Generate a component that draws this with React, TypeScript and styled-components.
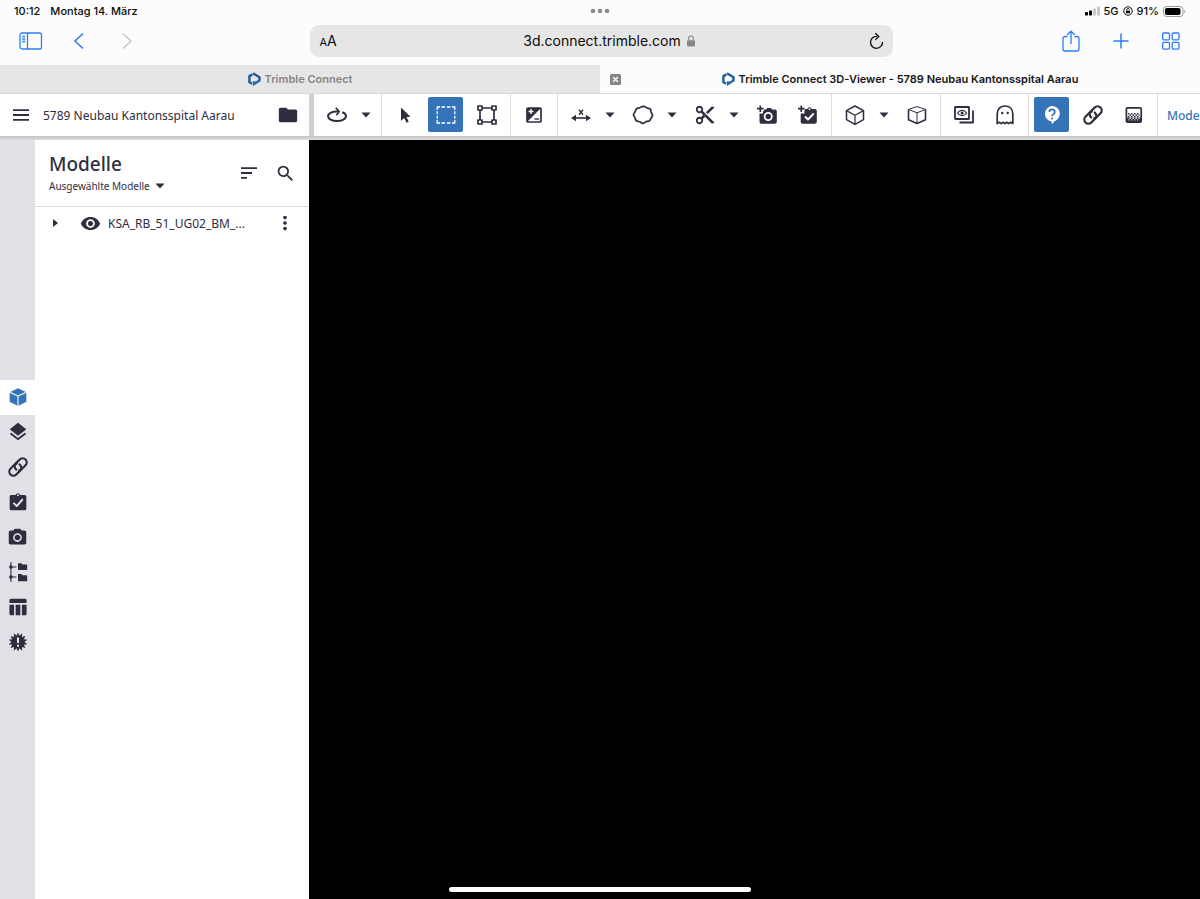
import React from "react";
import styled, { createGlobalStyle, css } from "styled-components";
import {
  MdContentCut,
  MdFolder,
  MdLayers,
  MdMoreVert,
  MdPhotoCamera,
  MdSearch,
  MdVisibility,
} from "react-icons/md";

const ink = "#2e2e3e";
const accent = "#3573b9";
const safariBlue = "#2f7cf6";

const GlobalStyle = createGlobalStyle`
  *, *::before, *::after { box-sizing: border-box; }
  body { margin: 0; background: #fcfcfc; }
  button, input, select { font: inherit; color: inherit; }
`;

const Page = styled.div`
  display: flex;
  flex-direction: column;
  min-height: 100vh;
  position: relative;
  font-family: "Noto Sans", "Open Sans", sans-serif;
  color: ${ink};
  overflow: hidden;
`;

/* ---------- Browser chrome ---------- */

const Chrome = styled.header`
  font-family: Inter, "Liberation Sans", sans-serif;
  color: #0b0b0b;
  background: #fcfcfc;
`;

const StatusBar = styled.div`
  display: grid;
  grid-template-columns: 1fr auto 1fr;
  align-items: center;
  height: 22px;
  padding: 0 14px;
  font-size: 11px;
  font-weight: 500;
`;

const StatusSide = styled.div<{ $end?: boolean; $gap: number }>`
  display: flex;
  align-items: center;
  justify-content: ${(p) => (p.$end ? "flex-end" : "flex-start")};
  gap: ${(p) => p.$gap}px;
`;

const NavRow = styled.div`
  display: grid;
  grid-template-columns: 1fr 583px 1fr;
  align-items: center;
  height: 43px;
  padding: 0 13px 6px 15px;
`;

const NavSide = styled.div<{ $end?: boolean }>`
  display: flex;
  align-items: center;
  justify-content: ${(p) => (p.$end ? "flex-end" : "flex-start")};
  gap: ${(p) => (p.$end ? 18 : 16)}px;
`;

const ChromeButton = styled.button<{ $muted?: boolean }>`
  display: grid;
  place-items: center;
  width: 32px;
  height: 32px;
  padding: 0;
  border: 0;
  background: none;
  color: ${(p) => (p.$muted ? "#c4c4c6" : safariBlue)};
`;

const AddressBar = styled.div`
  display: grid;
  grid-template-columns: 1fr auto 1fr;
  align-items: center;
  height: 32px;
  padding: 0 8px 0 10px;
  border-radius: 9px;
  background: #e6e6e6;
`;

const TextSizeButton = styled.button`
  justify-self: start;
  display: flex;
  align-items: baseline;
  padding: 0;
  border: 0;
  background: none;
  font-size: 14px;
`;

const SmallA = styled.span`
  font-size: 11px;
`;

const AddressField = styled.div`
  display: flex;
  align-items: center;
  gap: 5px;
  padding-left: 15px;
  color: #87878a;
`;

const AddressInput = styled.input`
  field-sizing: content;
  padding: 0;
  border: 0;
  background: none;
  color: #0b0b0b;
  font-size: 14px;
  outline: none;
`;

const ReloadButton = styled.button`
  justify-self: end;
  display: grid;
  place-items: center;
  padding: 0;
  border: 0;
  background: none;
`;

const TabStrip = styled.div`
  display: grid;
  grid-template-columns: 1fr 1fr;
  height: 29px;
  border-bottom: 1px solid #dadadb;
`;

const TabSlot = styled.div<{ $active?: boolean }>`
  display: grid;
  grid-template-columns: 20px 1fr 20px;
  align-items: center;
  padding: 0 5px;
  background: ${(p) => (p.$active ? "#fcfcfc" : "#e6e6e6")};
  color: ${(p) => (p.$active ? "#161616" : "#858587")};
`;

const TabButton = styled.button`
  grid-column: 2;
  display: flex;
  align-items: center;
  justify-content: center;
  gap: 4px;
  padding: 0;
  border: 0;
  background: none;
  font-size: 11px;
  font-weight: 600;
`;

const CloseTab = styled.button`
  display: grid;
  place-items: center;
  width: 20px;
  height: 20px;
  padding: 0;
  border: 0;
  background: none;
`;

/* ---------- Viewer toolbar ---------- */

const TopBar = styled.div`
  display: flex;
  gap: 5px;
  height: 46px;
  padding-bottom: 4px;
  background: linear-gradient(#cfcfd2 0 42px, #c3c3c5 42px, #dcdcde 46px);
`;

const ProjectBar = styled.div`
  flex: none;
  display: flex;
  align-items: center;
  width: 309px;
  padding: 0 9px 0 9px;
  background: #fff;
`;

const ProjectName = styled.span`
  flex: 1;
  padding-left: 10px;
  font-size: 12px;
  white-space: nowrap;
`;

const PlainButton = styled.button`
  display: grid;
  place-items: center;
  width: 24px;
  height: 24px;
  padding: 0;
  border: 0;
  background: none;
  color: ${ink};
`;

const Toolbar = styled.div`
  flex: 1;
  min-width: 0;
  display: flex;
  overflow: hidden;
  background: #fff;
`;

const ToolGroup = styled.div`
  flex: none;
  display: flex;
  align-items: center;
  padding: 0 3px 1px 2px;
  border-right: 1px solid #dbdbe0;
`;

const ToolButton = styled.button<{ $active?: boolean }>`
  display: grid;
  place-items: center;
  width: 35px;
  height: 35px;
  margin: 0 3px;
  padding: 0;
  border: 0;
  border-radius: 2px;
  background: none;
  color: ${ink};
  ${(p) =>
    p.$active &&
    css`
      background: ${accent};
      color: #fff;
    `}
`;

const CaretButton = styled.button`
  display: flex;
  align-items: center;
  width: 21px;
  height: 35px;
  padding: 0 0 0 4px;
  border: 0;
  background: none;
  color: ${ink};
`;

const TextButton = styled.button`
  flex: none;
  padding: 0 0 0 9px;
  border: 0;
  background: none;
  color: ${accent};
  font-size: 12px;
  font-weight: 500;
`;

/* ---------- Body ---------- */

const Body = styled.div`
  flex: 1;
  display: flex;
`;

const Rail = styled.nav`
  display: flex;
  flex-direction: column;
  justify-content: center;
  width: 35px;
  background: #e0e0e6;
`;

const RailButton = styled.button<{ $active?: boolean }>`
  display: grid;
  place-items: center;
  height: 35px;
  padding: 0;
  border: 0;
  background: ${(p) => (p.$active ? "#fff" : "none")};
  color: ${(p) => (p.$active ? accent : ink)};
`;

const Panel = styled.aside`
  width: 274px;
  background: #fff;
`;

const PanelHeader = styled.div`
  display: flex;
  align-items: center;
  gap: 12px;
  height: 67px;
  padding: 0 12px 0 14px;
  border-bottom: 1px solid #d9d9df;
`;

const PanelHeading = styled.div`
  flex: 1;
`;

const PanelTitle = styled.h1`
  margin: 0;
  font-size: 19px;
  line-height: 26px;
  font-weight: 500;
`;

const FilterSelect = styled.label`
  position: relative;
  display: flex;
  align-items: center;
  width: max-content;
  height: 18px;

  svg {
    position: absolute;
    right: 0;
    pointer-events: none;
  }
`;

const Select = styled.select`
  appearance: none;
  padding: 0 15px 0 0;
  border: 0;
  background: none;
  font-size: 10px;
  line-height: 18px;
`;

const ModelList = styled.ul`
  margin: 0;
  padding: 0;
  list-style: none;
`;

const ModelRow = styled.li`
  display: flex;
  align-items: center;
  height: 32px;
  padding: 0 12px 0 8px;
`;

const ModelName = styled.span`
  flex: 1;
  padding-left: 6px;
  font-size: 12px;
  white-space: nowrap;
`;

const EyeButton = styled(PlainButton)`
  margin-left: 11px;
`;

const Viewport = styled.main`
  flex: 1;
  background: #000;
`;

const HomeIndicator = styled.div`
  position: absolute;
  left: 50%;
  bottom: 7px;
  width: 302px;
  height: 5px;
  border-radius: 3px;
  background: #fff;
  transform: translateX(-50%);
`;

/* ---------- Icons ---------- */

type IconProps = { size?: number; weight?: number; children: React.ReactNode };

const Icon = ({ size = 24, weight = 2, children }: IconProps) => (
  <svg
    width={size}
    height={size}
    viewBox="0 0 24 24"
    fill="none"
    stroke="currentColor"
    strokeWidth={weight}
    strokeLinejoin="round"
    aria-hidden="true"
  >
    {children}
  </svg>
);

const Caret = () => (
  <svg width="10" height="6" viewBox="0 0 10 6" aria-hidden="true">
    <path d="M0.5 0.5h9L5 5.5z" fill={ink} />
  </svg>
);

const TrimbleLogo = () => (
  <svg width="13" height="14" viewBox="0 0 13 14" fill="none" stroke="#1d5a9a" strokeWidth="2.400" aria-hidden="true">
    <path d="M4.400 2.400L1.400 4.200v6l2.600 1.600" />
    <path d="M5 1.300l6.500 4v3" />
    <path d="M12.300 8L6 12V9.300" stroke="#2a6cab" />
  </svg>
);

const Rotate = () => (
  <Icon>
    <path d="M13.500 8.600C7.500 8 3 10.300 3 13.200 3 15.900 7 18 12 18s9-2.100 9-4.800c0-1.700-1.400-3.100-3.800-3.900" />
    <path d="M10.800 4.800l3.400 3.800-2.800 3.600" strokeWidth="1.700" />
  </Icon>
);

const Cursor = () => (
  <Icon>
    <path d="M8 4.500v13.200l3.200-2.700 2.300 4.700 2.200-1-2.200-4.700 4-.3z" fill="currentColor" stroke="none" />
  </Icon>
);

const Marquee = () => (
  <Icon weight={1.3}>
    <path d="M6 4H3.200V7M18 4h2.800V7M6 20H3.200V17M18 20h2.800V17M7.500 4h3.600M12.900 4h3.600M7.500 20h3.600M12.900 20h3.600M3.200 8.200v3M3.200 12.800v3M20.800 8.200v3M20.800 12.800v3" />
  </Icon>
);

const Transform = () => (
  <Icon weight={1.7}>
    <path d="M7 5h10M7 19h10M5 7v10M19 7v10" />
    <path d="M3 3h4v4H3zM17 3h4v4h-4zM3 17h4v4H3zM17 17h4v4h-4z" />
  </Icon>
);

const Exposure = () => (
  <Icon weight={1.7}>
    <rect x="5" y="5" width="14" height="14" rx="1" />
    <path d="M5 19V5h14z" fill="currentColor" stroke="none" />
    <path d="M9 6v5M6.500 8.500h5" stroke="#fff" strokeWidth="1.400" />
    <path d="M12.500 16h4.500" strokeWidth="1.400" />
  </Icon>
);

const Measure = () => (
  <Icon weight={1.6}>
    <path d="M6 15h12" />
    <path d="M2 15l5-3.200v6.400zM22 15l-5-3.200v6.400z" fill="currentColor" stroke="none" />
    <path d="M10 6.800l4 5M14 6.800l-4 5" strokeWidth="1.400" />
  </Icon>
);

const Cloud = () => (
  <Icon weight={1.7}>
    <path d="M7.500 5.200C9 5.400 10 3.300 12.300 3.300S15.300 5 16.800 5.100c2.200.1 3.300 1.600 3.100 3.400-.1 1.500 1.600 2 1.600 3.900s-1.700 2.300-2 3.700c-.4 1.700-1.700 2.500-3.500 2.300-1.500-.1-1.900 1.900-4 1.900s-2.700-1.700-4.200-1.800c-2.400-.1-3.500-1.200-3.600-3-.1-1.500-1.700-2-1.700-3.800s1.900-2.400 2-3.800c.1-1.700 1.300-2.900 3-2.700z" />
  </Icon>
);

const SnapCamera = () => (
  <Icon>
    <path
      d="M9 8V6.500h2L12.300 5h3.400L17.200 6.500H20a1.800 1.800 0 0 1 1.800 1.800V19a1.800 1.800 0 0 1-1.800 1.800H6.300A1.800 1.800 0 0 1 4.500 19V10.500H8V8z"
      fill="currentColor"
      stroke="none"
    />
    <circle cx="13.200" cy="13.500" r="3.600" stroke="#fff" strokeWidth="1.800" />
    <path d="M5.300 2.500v6.500M2 5.700h6.600" strokeWidth="1.700" />
  </Icon>
);

const AddTask = () => (
  <Icon>
    <path
      d="M9.500 6h1.800a2.300 2.300 0 0 1 4.400 0H19a1.800 1.800 0 0 1 1.800 1.800V19a1.800 1.800 0 0 1-1.800 1.800H6.500A1.800 1.800 0 0 1 4.700 19V10.500H8.500V7z"
      fill="currentColor"
      stroke="none"
    />
    <circle cx="13.500" cy="6.200" r="0.900" fill="#fff" stroke="none" />
    <path d="M9 13.500l3 3 5.700-6" stroke="#fff" />
    <path d="M5.300 2.500v6.500M2 5.700h6.600" strokeWidth="1.700" />
  </Icon>
);

const Cube = () => (
  <Icon weight={1.5}>
    <path d="M12 3l8.500 4.600v9L12 21.300l-8.500-4.700v-9z" />
    <path d="M3.500 7.600L12 12.200l8.500-4.600M12 12.200v9" strokeWidth="1.200" />
  </Icon>
);

const ClipBox = () => (
  <Icon weight={1.6}>
    <path d="M3.500 6.400v10.300l8.500 3.800 8.500-3.800V6.400" />
    <path d="M3.500 6.400L12 3.600l8.500 2.800L12 9.800zM12 9.800v10.700" strokeWidth="1" />
  </Icon>
);

const Views = () => (
  <Icon weight={1.8}>
    <rect x="3" y="4" width="14" height="12" rx="0.500" />
    <path d="M21 7.500v12H7.500" />
    <path d="M5.600 10c2.200-3.600 6.800-3.600 9 0-2.200 3.600-6.800 3.600-9 0z" strokeWidth="1.200" />
    <circle cx="10.100" cy="10" r="1.500" fill="currentColor" stroke="none" />
  </Icon>
);

const Ghost = () => (
  <Icon weight={1.7}>
    <path d="M4.200 20.500V11C4.200 6 7.500 3 12 3s7.800 3 7.800 8v9.500l-2.200-1.200-1.900 1.300-1.900-1.300-1.800 1.300-1.800-1.300-1.900 1.300-1.900-1.300z" />
    <circle cx="9.300" cy="10" r="1.200" fill="currentColor" stroke="none" />
    <circle cx="14.700" cy="10" r="1.200" fill="currentColor" stroke="none" />
  </Icon>
);

const Help = () => (
  <Icon>
    <path d="M12 3a7.800 7.800 0 0 1 2.500 15.200L11.800 21.500V18.500A7.800 7.800 0 0 1 12 3z" fill="currentColor" stroke="none" />
    <path d="M9.300 8.900c.2-3.300 5.500-3.300 5.500.1 0 2-2.700 2.200-2.700 4.300" stroke={accent} strokeWidth="1.800" />
    <circle cx="12.100" cy="15.500" r="1.100" fill={accent} stroke="none" />
  </Icon>
);

const Chain = () => (
  <Icon weight={2.2}>
    <g transform="rotate(-45 12 12)" strokeLinecap="round">
      <path d="M13.500 8.800a4 4 0 0 0-2.500-.9H5.500a4.100 4.100 0 0 0 0 8.200H11a4.100 4.100 0 0 0 4-4.600" />
      <path d="M10.500 15.200a4 4 0 0 0 2.500.9h5.500a4.100 4.100 0 0 0 0-8.200H13a4.100 4.100 0 0 0-4 4.600" />
    </g>
  </Icon>
);

const Dither = () => (
  <Icon weight={1.7}>
    <rect x="4.400" y="4.800" width="14.800" height="14.400" rx="1.200" />
    <path d="M6 10.800h12" strokeWidth="1.500" strokeDasharray="1.500 1.500" />
    <path d="M7.500 12.300h10" strokeWidth="1.500" strokeDasharray="1.500 1.500" />
    <path d="M6 13.800h12" strokeWidth="1.500" strokeDasharray="1.500 1.500" />
    <path d="M5 17h14" strokeWidth="4.800" />
    <path d="M7.500 15.300h10" stroke="#fff" strokeWidth="1.300" strokeDasharray="1.300 1.700" />
    <path d="M6 16.900h12" stroke="#fff" strokeWidth="0.900" strokeDasharray="1.300 1.700" />
  </Icon>
);

const SolidCube = () => (
  <Icon size={20}>
    <path d="M12 1.500l10 4.700v11.500l-10 5-10-5V6.200z" fill="currentColor" stroke="none" />
    <path d="M2 6.200l10 4.600 10-4.600M12 10.800v12" stroke="#fff" strokeWidth="1.300" />
  </Icon>
);

const TaskBoard = () => (
  <Icon size={20}>
    <path
      d="M4 3.500h5.200a3 3 0 0 1 5.600 0H20a2 2 0 0 1 2 2V20a2 2 0 0 1-2 2H4a2 2 0 0 1-2-2V5.500a2 2 0 0 1 2-2z"
      fill="currentColor"
      stroke="none"
    />
    <circle cx="12" cy="3.900" r="1.100" fill="#e0e0e6" stroke="none" />
    <path d="M6.500 13l4 4 7.200-8.500" stroke="#e8e8ee" strokeWidth="2.300" />
  </Icon>
);

const Hierarchy = () => (
  <Icon size={20} weight={1.3}>
    <path d="M3.500 0v24M3.500 6H10M3.500 18H10" />
    <circle cx="3.500" cy="6" r="2.200" fill="currentColor" stroke="none" />
    <circle cx="3.500" cy="18" r="2.200" fill="currentColor" stroke="none" />
    <path
      d="M12 1.500h4l1.500 1.500H22a1 1 0 0 1 1 1v5.500H12zM12 14.500h4l1.500 1.500H22a1 1 0 0 1 1 1v6H12z"
      fill="currentColor"
      stroke="none"
    />
  </Icon>
);

const Columns = () => (
  <Icon size={20}>
    <path
      d="M3.500 2h17A1.800 1.800 0 0 1 22.300 4v3.200H1.700V4a1.800 1.800 0 0 1 1.800-2zM1.700 9.200h5.600V22H3.500A1.800 1.800 0 0 1 1.700 20zM9.200 9.200h5.600V22H9.200zM16.700 9.200h5.600V20a1.800 1.800 0 0 1-1.800 2h-3.800z"
      fill="currentColor"
      stroke="none"
    />
  </Icon>
);

const burst = Array.from({ length: 28 }, (_, i) => {
  const r = i % 2 ? 7.8 : 11.5;
  const a = (i * Math.PI) / 14;
  return `${(12 + r * Math.sin(a)).toFixed(1)},${(12 - r * Math.cos(a)).toFixed(1)}`;
}).join(" ");

const Clash = () => (
  <Icon size={20}>
    <polygon points={burst} fill="currentColor" stroke="none" />
    <path d="M12 6.500v6.800M12 15.200v2.600" stroke="#e8e8ee" strokeWidth="2.400" />
  </Icon>
);

const rail = [
  { label: "Modelle", icon: <SolidCube /> },
  { label: "Ebenen", icon: <MdLayers size={22} /> },
  { label: "Verknüpfungen", icon: <Chain /> },
  { label: "Aufgaben", icon: <TaskBoard /> },
  { label: "Ansichten", icon: <MdPhotoCamera size={21} /> },
  { label: "Struktur", icon: <Hierarchy /> },
  { label: "Daten", icon: <Columns /> },
  { label: "Kollisionen", icon: <Clash /> },
];

const Tool = ({ label, active, children }: { label: string; active?: boolean; children: React.ReactNode }) => (
  <ToolButton aria-label={label} $active={active}>
    {children}
  </ToolButton>
);

const More = ({ label }: { label: string }) => (
  <CaretButton aria-label={label}>
    <Caret />
  </CaretButton>
);

export default function App() {
  return (
    <Page>
      <GlobalStyle />
      <Chrome>
        <StatusBar>
          <StatusSide $gap={10}>
            <span>10:12</span>
            <span>Montag 14. März</span>
          </StatusSide>
          <svg width="20" height="6" viewBox="0 0 20 6" fill="#8b8b8d" aria-hidden="true">
            <circle cx="3" cy="3" r="2.300" />
            <circle cx="10" cy="3" r="2.300" />
            <circle cx="17" cy="3" r="2.300" />
          </svg>
          <StatusSide $end $gap={4}>
            <svg width="15" height="10" viewBox="0 0 15 10" aria-hidden="true">
              <rect x="0" y="6" width="3" height="3.500" rx="0.800" />
              <rect x="4" y="4.500" width="3" height="5" rx="0.800" />
              <rect x="8" y="2.500" width="3" height="7" rx="0.800" fill="#c8c8ca" />
              <rect x="12" y="0.500" width="3" height="9" rx="0.800" fill="#c8c8ca" />
            </svg>
            <span>5G</span>
            <svg width="10" height="10" viewBox="0 0 10 10" fill="none" stroke="#0b0b0b" aria-hidden="true">
              <circle cx="5" cy="5" r="4.200" strokeWidth="1" />
              <rect x="3" y="4.500" width="4" height="2.800" rx="0.500" fill="#0b0b0b" stroke="none" />
              <path d="M3.800 4.500V3.600a1.200 1.200 0 0 1 2.400 0" strokeWidth="0.800" />
            </svg>
            <span>91%</span>
            <svg width="23" height="11" viewBox="0 0 23 11" aria-hidden="true">
              <rect x="0.500" y="0.500" width="19.500" height="10" rx="3" fill="none" stroke="#9a9a9c" />
              <rect x="2" y="2" width="15.500" height="7" rx="1.800" />
              <path d="M21.300 3.800v3.400c1.400-.6 1.400-2.800 0-3.400z" fill="#9a9a9c" />
            </svg>
          </StatusSide>
        </StatusBar>

        <NavRow>
          <NavSide>
            <ChromeButton aria-label="Seitenleiste">
              <svg width="24" height="18" viewBox="0 0 24 18" fill="none" stroke="currentColor" strokeWidth="1.300" aria-hidden="true">
                <rect x="1" y="1" width="21.500" height="16" rx="2" />
                <path d="M8.500 1v16M3.200 4.500h3M3.200 7h3M3.200 9.500h3" />
              </svg>
            </ChromeButton>
            <ChromeButton aria-label="Zurück">
              <svg width="12" height="18" viewBox="0 0 12 18" fill="none" stroke="currentColor" strokeWidth="1.600" aria-hidden="true">
                <path d="M10 1.500L2 9l8 7.500" />
              </svg>
            </ChromeButton>
            <ChromeButton $muted aria-label="Vorwärts">
              <svg width="12" height="18" viewBox="0 0 12 18" fill="none" stroke="currentColor" strokeWidth="1.300" aria-hidden="true">
                <path d="M2 1.500L10 9l-8 7.500" />
              </svg>
            </ChromeButton>
          </NavSide>

          <AddressBar>
            <TextSizeButton aria-label="Textgröße">
              <SmallA>A</SmallA>A
            </TextSizeButton>
            <AddressField>
              <AddressInput aria-label="Adresse" defaultValue="3d.connect.trimble.com" />
              <svg width="10" height="12" viewBox="0 0 10 12" aria-hidden="true">
                <rect x="1" y="5.300" width="8" height="6.200" rx="1" fill="currentColor" />
                <path d="M2.700 5.500V3.300a2.300 2.300 0 0 1 4.600 0v2.200" fill="none" stroke="currentColor" strokeWidth="1.100" />
              </svg>
            </AddressField>
            <ReloadButton aria-label="Neu laden">
              <svg width="17" height="18" viewBox="0 0 17 18" fill="none" stroke="#0b0b0b" strokeWidth="1.300" aria-hidden="true">
                <path d="M9 4.300A6 6 0 1 0 14.500 10" />
                <path d="M7.300 1.300l3.500 3.200-3.500 3.400" />
              </svg>
            </ReloadButton>
          </AddressBar>

          <NavSide $end>
            <ChromeButton aria-label="Teilen">
              <svg width="20" height="22" viewBox="0 0 20 22" fill="none" stroke="currentColor" strokeWidth="1.300" aria-hidden="true">
                <path d="M6.500 6.500H4a2 2 0 0 0-2 2V19a2 2 0 0 0 2 2h12a2 2 0 0 0 2-2V8.500a2 2 0 0 0-2-2h-2.500" />
                <path d="M10 14V1.200M6.300 4.800L10 1.200l3.700 3.600" />
              </svg>
            </ChromeButton>
            <ChromeButton aria-label="Neuer Tab">
              <svg width="16" height="16" viewBox="0 0 16 16" stroke="currentColor" strokeWidth="1.500" aria-hidden="true">
                <path d="M8 0.500v15M0.500 8h15" />
              </svg>
            </ChromeButton>
            <ChromeButton aria-label="Tabübersicht">
              <svg width="20" height="20" viewBox="0 0 20 20" fill="none" stroke="currentColor" strokeWidth="1.300" aria-hidden="true">
                <rect x="1.700" y="2" width="6.800" height="6.800" rx="1" />
                <rect x="11.200" y="2" width="6.800" height="6.800" rx="1" />
                <rect x="1.700" y="11.300" width="6.800" height="6.800" rx="1" />
                <rect x="11.200" y="11.300" width="6.800" height="6.800" rx="1" />
              </svg>
            </ChromeButton>
          </NavSide>
        </NavRow>

        <TabStrip>
          <TabSlot>
            <TabButton>
              <TrimbleLogo />
              Trimble Connect
            </TabButton>
          </TabSlot>
          <TabSlot $active>
            <CloseTab aria-label="Tab schließen">
              <svg width="11" height="11" viewBox="0 0 11 11" aria-hidden="true">
                <rect width="11" height="11" rx="1.500" fill="#838385" />
                <path d="M3 3l5 5M8 3L3 8" stroke="#fff" strokeWidth="1.300" />
              </svg>
            </CloseTab>
            <TabButton>
              <TrimbleLogo />
              Trimble Connect 3D-Viewer - 5789 Neubau Kantonsspital Aarau
            </TabButton>
          </TabSlot>
        </TabStrip>
      </Chrome>

      <TopBar>
        <ProjectBar>
          <PlainButton aria-label="Menü">
            <svg width="16" height="12" viewBox="0 0 16 12" stroke={ink} strokeWidth="1.800" aria-hidden="true">
              <path d="M0 1.200h16M0 6h16M0 10.800h16" />
            </svg>
          </PlainButton>
          <ProjectName>5789 Neubau Kantonsspital Aarau</ProjectName>
          <PlainButton aria-label="Projektordner">
            <MdFolder size={22} />
          </PlainButton>
        </ProjectBar>
        <Toolbar role="toolbar" aria-label="Werkzeuge">
          <ToolGroup>
            <Tool label="Drehen"><Rotate /></Tool>
            <More label="Navigationsmodus" />
          </ToolGroup>
          <ToolGroup>
            <Tool label="Auswählen"><Cursor /></Tool>
            <Tool label="Bereichsauswahl" active><Marquee /></Tool>
            <Tool label="Transformieren"><Transform /></Tool>
          </ToolGroup>
          <ToolGroup>
            <Tool label="Darstellung"><Exposure /></Tool>
          </ToolGroup>
          <ToolGroup>
            <Tool label="Messen"><Measure /></Tool>
            <More label="Messoptionen" />
            <Tool label="Markieren"><Cloud /></Tool>
            <More label="Markierungsoptionen" />
            <Tool label="Schneiden"><MdContentCut size={22} /></Tool>
            <More label="Schnittoptionen" />
            <Tool label="Ansicht erstellen"><SnapCamera /></Tool>
            <Tool label="Aufgabe erstellen"><AddTask /></Tool>
          </ToolGroup>
          <ToolGroup>
            <Tool label="Standardansicht"><Cube /></Tool>
            <More label="Ansichtsoptionen" />
            <Tool label="Perspektive"><ClipBox /></Tool>
          </ToolGroup>
          <ToolGroup>
            <Tool label="Sichtbarkeit"><Views /></Tool>
            <Tool label="Transparenz"><Ghost /></Tool>
          </ToolGroup>
          <ToolGroup>
            <Tool label="Hilfe" active><Help /></Tool>
            <Tool label="Link kopieren"><Chain /></Tool>
            <Tool label="Punktwolke"><Dither /></Tool>
          </ToolGroup>
          <TextButton>Mode</TextButton>
        </Toolbar>
      </TopBar>

      <Body>
        <Rail aria-label="Bereiche">
          {rail.map((item, i) => (
            <RailButton key={item.label} aria-label={item.label} $active={i === 0}>
              {item.icon}
            </RailButton>
          ))}
        </Rail>
        <Panel>
          <PanelHeader>
            <PanelHeading>
              <PanelTitle>Modelle</PanelTitle>
              <FilterSelect>
                <Select aria-label="Modellfilter">
                  <option>Ausgewählte Modelle</option>
                </Select>
                <Caret />
              </FilterSelect>
            </PanelHeading>
            <PlainButton aria-label="Sortieren">
              <svg width="16" height="12" viewBox="0 0 16 12" stroke={ink} strokeWidth="1.800" aria-hidden="true">
                <path d="M0 1.200h16M0 6h11M0 10.800h6" />
              </svg>
            </PlainButton>
            <PlainButton aria-label="Suchen">
              <MdSearch size={21} />
            </PlainButton>
          </PanelHeader>
          <ModelList>
            <ModelRow>
              <PlainButton aria-label="Aufklappen">
                <svg width="5" height="8" viewBox="0 0 5 8" aria-hidden="true">
                  <path d="M0 0l5 4-5 4z" fill={ink} />
                </svg>
              </PlainButton>
              <EyeButton aria-label="Sichtbar">
                <MdVisibility size={21} />
              </EyeButton>
              <ModelName>KSA_RB_51_UG02_BM_...</ModelName>
              <PlainButton aria-label="Weitere Aktionen">
                <MdMoreVert size={22} />
              </PlainButton>
            </ModelRow>
          </ModelList>
        </Panel>
        <Viewport aria-label="3D-Ansicht" />
      </Body>
      <HomeIndicator />
    </Page>
  );
}
